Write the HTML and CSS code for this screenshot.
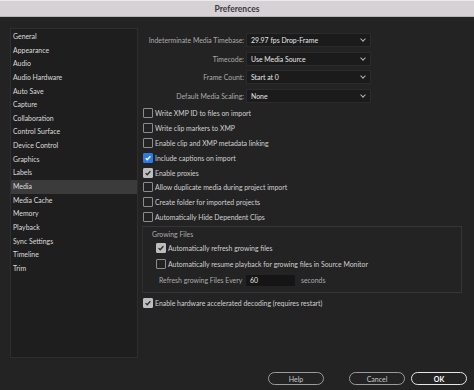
FILE: index.html
```html
<!DOCTYPE html>
<html lang="en">
<head>
<meta charset="UTF-8">
<title>Preferences</title>
<link rel="stylesheet" href="styles.css">
</head>
<body>
<div class="window">
  <div class="titlebar">Preferences</div>

  <div class="body">
    <ul class="sidebar">
      <li>General</li>
      <li>Appearance</li>
      <li>Audio</li>
      <li>Audio Hardware</li>
      <li>Auto Save</li>
      <li>Capture</li>
      <li>Collaboration</li>
      <li>Control Surface</li>
      <li>Device Control</li>
      <li>Graphics</li>
      <li>Labels</li>
      <li class="active">Media</li>
      <li>Media Cache</li>
      <li>Memory</li>
      <li>Playback</li>
      <li>Sync Settings</li>
      <li>Timeline</li>
      <li>Trim</li>
    </ul>

    <div class="content">
      <div class="fields">
        <label>Indeterminate Media Timebase:</label>
        <div class="select">29.97 fps Drop-Frame<span class="chev"></span></div>
        <label>Timecode:</label>
        <div class="select">Use Media Source<span class="chev"></span></div>
        <label>Frame Count:</label>
        <div class="select">Start at 0<span class="chev"></span></div>
        <label>Default Media Scaling:</label>
        <div class="select">None<span class="chev"></span></div>
      </div>

      <div class="checks">
        <div class="check"><span class="box"></span>Write XMP ID to files on import</div>
        <div class="check"><span class="box"></span>Write clip markers to XMP</div>
        <div class="check"><span class="box"></span>Enable clip and XMP metadata linking</div>
        <div class="check"><span class="box blue"><svg viewBox="0 0 10 10"><path d="M2 5.2l2 2L8 2.8"/></svg></span>Include captions on import</div>
        <div class="check"><span class="box on"><svg viewBox="0 0 10 10"><path d="M2 5.2l2 2L8 2.8"/></svg></span>Enable proxies</div>
        <div class="check"><span class="box"></span>Allow duplicate media during project import</div>
        <div class="check"><span class="box"></span>Create folder for imported projects</div>
        <div class="check"><span class="box"></span>Automatically Hide Dependent Clips</div>
      </div>

      <div class="group">
        <div class="group-title">Growing Files</div>
        <div class="check"><span class="box on"><svg viewBox="0 0 10 10"><path d="M2 5.2l2 2L8 2.8"/></svg></span>Automatically refresh growing files</div>
        <div class="check"><span class="box"></span>Automatically resume playback for growing files in Source Monitor</div>
        <div class="refresh">
          <span class="refresh-label">Refresh growing Files Every</span>
          <span class="input">60</span>
          <span class="unit">seconds</span>
        </div>
      </div>

      <div class="check hw"><span class="box on"><svg viewBox="0 0 10 10"><path d="M2 5.2l2 2L8 2.8"/></svg></span>Enable hardware accelerated decoding (requires restart)</div>
    </div>
  </div>

  <div class="footer">
    <button class="btn">Help</button>
    <button class="btn cancel">Cancel</button>
    <button class="btn ok">OK</button>
  </div>
</div>
</body>
</html>
```

FILE: styles.css
```css
body {
  margin: 0;
  background: #232323;
  font-family: Lato, "Liberation Sans", sans-serif;
  font-size: 6.9px;
  color: #d0d0d0;
}
.window {
  width: 474px;
  height: 390px;
  display: flex;
  flex-direction: column;
  background: #232323;
  overflow: hidden;
  white-space: nowrap;
}
.titlebar {
  height: 17px;
  line-height: 16px;
  background: #d5d1d5;
  border-top: 1px solid #ecebec;
  box-sizing: border-box;
  border-bottom: 1px solid #b8b4b8;
  text-align: center;
  font-weight: bold;
  font-size: 8.5px;
  color: #3c3a3d;
}
.body {
  display: flex;
  padding: 11px 0 0 10px;
  height: 331px;
}

/* left category list */
.sidebar {
  list-style: none;
  margin: 0;
  padding: 1px 0 0;
  width: 128px;
  height: 330px;
  box-sizing: border-box;
  background: #1e1e1e;
  border: 1px solid #2e2e2e;
}
.sidebar li {
  height: 13.65px;
  line-height: 13.65px;
  padding-left: 2px;
  color: #dcdcdc;
}
.sidebar li.active {
  background: #3b3b3b;
}

/* right panel */
.content {
  flex: 1;
  padding: 6px 11px 0 5px;
}
.fields {
  display: grid;
  grid-template-columns: 101px 123px;
  column-gap: 3px;
  row-gap: 6.7px;
  align-items: center;
}
.fields label {
  text-align: right;
  color: #ababab;
}
.select {
  position: relative;
  height: 12px;
  line-height: 12px;
  padding-left: 4px;
  background: #1b1b1b;
  box-shadow: 0 0 0 1px #2b2b2b;
  color: #e6e6e6;
}
.chev {
  position: absolute;
  right: 5px;
  top: 3px;
  width: 3px;
  height: 3px;
  border-right: 1px solid #b0b0b0;
  border-bottom: 1px solid #b0b0b0;
  transform: rotate(45deg);
}

.checks {
  margin-top: 3.5px;
}
.check {
  display: flex;
  align-items: center;
  height: 14.9px;
  color: #d0d0d0;
}
.box {
  width: 8px;
  height: 8px;
  margin-right: 2px;
  border: 1px solid #8c8c8c;
  border-radius: 1px;
  flex-shrink: 0;
  display: flex;
}
.box svg {
  width: 8px;
  height: 8px;
  fill: none;
  stroke-width: 1.6;
}
.box.blue {
  background: #2d7be6;
  border-color: #2d7be6;
}
.box.blue svg {
  stroke: #fff;
}
.box.on {
  background: #bdbdbd;
  border-color: #bdbdbd;
}
.box.on svg {
  stroke: #2a2a2a;
}

.group {
  margin-top: 1.5px;
  margin-left: -1px;
  width: 320px;
  height: 67px;
  box-sizing: border-box;
  border: 1px solid #353535;
  border-left-color: #2f2f2f;
  padding: 1px 0 0 13px;
}
.group .check {
  height: 16px;
}
.group-title {
  margin-left: -4px;
  height: 12px;
  line-height: 12px;
  color: #ababab;
}
.refresh {
  display: flex;
  align-items: center;
  height: 16px;
  padding-left: 3px;
}
.refresh-label {
  width: 87px;
  color: #ababab;
}
.input {
  width: 45px;
  height: 11px;
  line-height: 11px;
  padding-left: 4px;
  background: #151515;
  color: #e6e6e6;
}
.unit {
  margin-left: 6px;
  color: #ababab;
}
.hw {
  margin-top: 2px;
}

/* bottom buttons */
.footer {
  display: flex;
  justify-content: flex-end;
  gap: 25px;
  padding: 13px 7px 0 0;
}
.btn {
  width: 56px;
  height: 13px;
  padding: 0;
  border: 1px solid #9b9b9b;
  border-radius: 7px;
  background: transparent;
  color: #c8c8c8;
  font-family: Lato, "Liberation Sans", sans-serif;
  font-size: 7px;
}
.btn.ok {
  margin-left: -19px;
  border-color: #e6e6e6;
  color: #fff;
  font-weight: bold;
}
```
